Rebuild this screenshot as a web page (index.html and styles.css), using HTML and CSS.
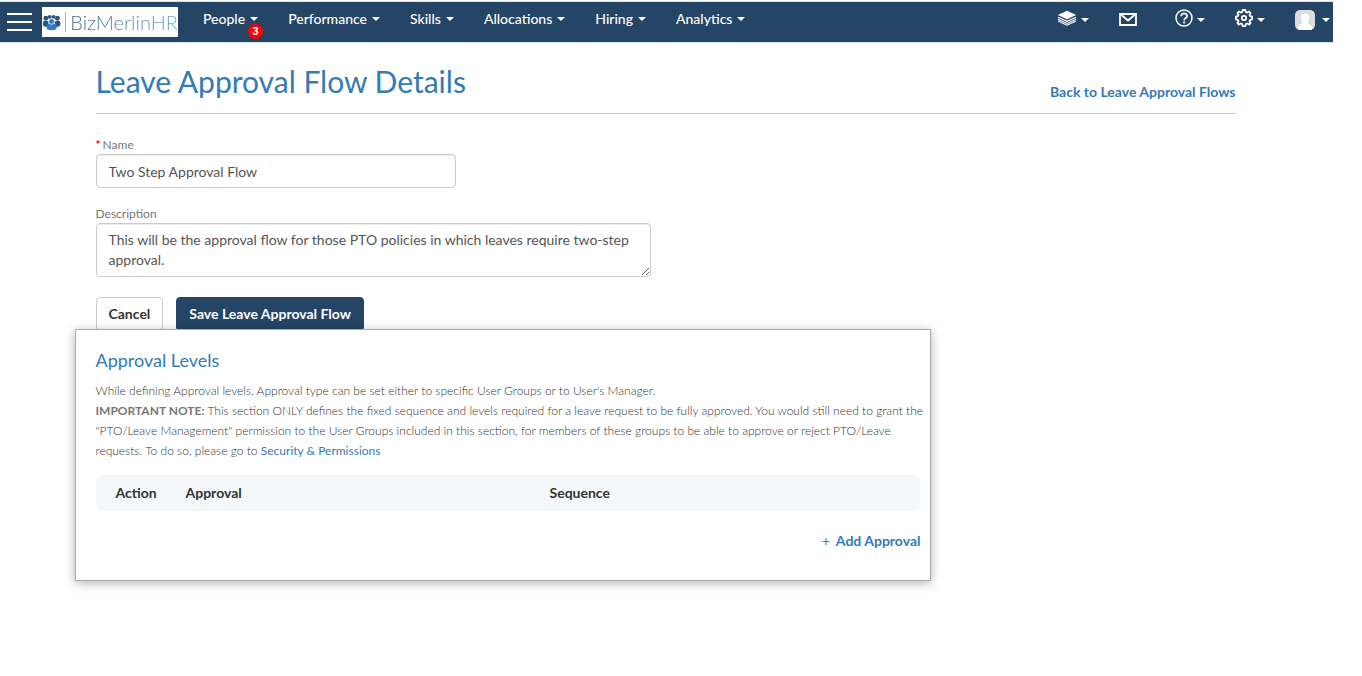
FILE: index.html
```html
<!DOCTYPE html>
<html lang="en">
<head>
<meta charset="utf-8">
<meta name="viewport" content="width=device-width, initial-scale=1">
<title>Leave Approval Flow Details</title>
<link rel="stylesheet" href="styles.css">
</head>
<body>
<header class="navbar">
  <button class="menu-toggle" type="button" aria-label="Menu"><span></span><span></span><span></span></button>
  <a class="brand" href="#">
    <svg class="brand-icon" width="20" height="17" viewBox="0 0 20 17" aria-hidden="true">
      <g fill="#2b5580">
        <circle cx="4" cy="4" r="2.500"/><circle cx="16" cy="4" r="2.500"/>
        <circle cx="8" cy="2.600" r="2"/><circle cx="12" cy="2.600" r="2"/>
        <path d="M.8 10Q.8 6.500 4 6.500Q6.200 6.500 7 8.500L5.400 13Q.8 13 .8 10zM19.200 10Q19.200 6.500 16 6.500Q13.800 6.500 13 8.500L14.600 13Q19.200 13 19.200 10z"/>
      </g>
      <g fill="#2f7ac0">
        <path d="M4.600 13.200Q4.600 10.200 7.600 9.800Q10 11.400 12.400 9.800Q15.400 10.200 15.400 13.200Q15.400 16.600 10 16.600Q4.600 16.600 4.600 13.200z"/>
        <circle cx="10" cy="7.400" r="2.800" stroke="#fff" stroke-width=".5"/>
      </g>
    </svg>
    <span class="brand-name">BizMerlinHR</span>
  </a>
  <nav class="main-nav">
    <a href="#">People<i class="caret"></i><span class="badge">3</span></a>
    <a href="#">Performance<i class="caret"></i></a>
    <a href="#">Skills<i class="caret"></i></a>
    <a href="#">Allocations<i class="caret"></i></a>
    <a href="#">Hiring<i class="caret"></i></a>
    <a href="#">Analytics<i class="caret"></i></a>
  </nav>
  <nav class="tools">
    <a href="#" aria-label="Modules">
      <svg width="20" height="16" viewBox="0 0 20 16"><path d="M10 .8L19.200 5L10 9.200L.8 5z" fill="#fff"/><path d="M1 7.200L10 11.300L19 7.200M1 9.300L10 13.400L19 9.300M1 11L10 15.200L19 11" fill="none" stroke="#fff" stroke-width="1.100"/></svg><i class="caret"></i></a>
    <a class="mail" href="#" aria-label="Messages">
      <svg width="18" height="13" viewBox="0 0 18 13"><path d="M1 1H17V12H1zM2.500 2L9 7.500L15.500 2" fill="none" stroke="#fff" stroke-width="1.800"/></svg></a>
    <a href="#" aria-label="Help">
      <svg width="18" height="18" viewBox="0 0 18 18" fill="none" stroke="#fff"><circle cx="9" cy="9" r="8" stroke-width="1.500"/><path d="M6.200 7.200Q6.200 4.300 9 4.300Q12 4.300 12 6.900Q12 8.300 10.500 9.200Q9.200 10 9.200 11.400" stroke-width="1.800"/><path d="M9.200 12.600V14.400" stroke-width="1.900"/></svg><i class="caret"></i></a>
    <a href="#" aria-label="Settings">
      <svg width="18" height="18" viewBox="0 0 18 18" fill="none" stroke="#fff" stroke-width="1.800" stroke-linejoin="round"><path d="M7.200 3L7.700 1H10.300L10.800 3L12.200 3.600L14 2.500L15.600 4.100L14.500 5.900L15.100 7.200L17.100 7.700V10.300L15.100 10.800L14.500 12.200L15.600 14L14 15.600L12.200 14.500L10.800 15.100L10.300 17.100H7.700L7.200 15.100L5.800 14.500L4 15.600L2.400 14L3.500 12.200L2.900 10.800L.9 10.300V7.700L2.900 7.200L3.500 5.900L2.400 4.100L4 2.500L5.800 3.600z"/><circle cx="9" cy="9" r="2.200"/></svg><i class="caret"></i></a>
    <a class="account" href="#" aria-label="Account">
      <svg width="20" height="20" viewBox="0 0 20 20"><rect width="20" height="20" rx="5" fill="#dcdcdc"/><path d="M10 3.500C13 3.500 14.500 5.500 14.300 8.300C14.100 10.500 13.200 11.800 12.500 12.600C12.500 14.200 17 14.300 17 18.500V20H3V18.500C3 14.300 7.500 14.200 7.500 12.600C6.800 11.800 5.900 10.500 5.700 8.300C5.500 5.500 7 3.500 10 3.500z" fill="#fff"/></svg><i class="caret"></i></a>
  </nav>
</header>

<main class="container">
  <div class="page-head">
    <h1>Leave Approval Flow Details</h1>
    <a href="#">Back to Leave Approval Flows</a>
  </div>

  <form class="flow-form">
    <div class="field field-name">
      <label for="name"><span class="required">*</span>Name</label>
      <input id="name" type="text" value="Two Step Approval Flow">
    </div>
    <div class="field field-description">
      <label for="description">Description</label>
      <textarea id="description" rows="2">This will be the approval flow for those PTO policies in which leaves require two-step approval.</textarea>
    </div>
    <div class="actions">
      <button class="btn" type="button">Cancel</button>
      <button class="btn btn-primary" type="submit">Save Leave Approval Flow</button>
    </div>
  </form>

  <section class="levels">
    <h2>Approval Levels</h2>
    <p>While defining Approval levels, Approval type can be set either to specific User Groups or to User's Manager.<br>
    <b>IMPORTANT NOTE:</b> This section ONLY defines the fixed sequence and levels required for a leave request to be fully approved. You would still need to grant the "PTO/Leave Management" permission to the User Groups included in this section, for members of these groups to be able to approve or reject PTO/Leave requests. To do so, please go to <a href="#">Security &amp; Permissions</a></p>
    <table>
      <thead><tr><th class="col-action">Action</th><th class="col-approval">Approval</th><th>Sequence</th></tr></thead>
    </table>
    <button class="add" type="button"><span class="plus">+</span>Add Approval</button>
  </section>
</main>
</body>
</html>
```
FILE: styles.css
```css
* { box-sizing: border-box; }

body {
  margin: 0;
  padding: 1px 29px 0 0;
  background: #fff;
  color: #777;
  font: 14px/20px Lato, "Liberation Sans", sans-serif;
}

a { color: #337ab7; text-decoration: none; }
button { font-family: inherit; cursor: pointer; }

/* Navigation bar */
.navbar {
  display: flex;
  align-items: flex-start;
  height: 42px;
  padding-left: 7px;
  border: solid #dce3ea;
  border-width: 1px 0;
  background: #244566;
}
.menu-toggle {
  display: flex;
  flex-direction: column;
  gap: 6px;
  width: 25px;
  margin-right: 10px;
  padding: 11px 0 0;
  border: 0;
  background: none;
}
.menu-toggle span { height: 2px; background: #fff; }
.brand {
  display: flex;
  align-items: center;
  width: 136px;
  height: 30px;
  margin-top: 5px;
  background: #fff;
}
.brand-icon { margin-right: 4px; }
.brand-name {
  padding-left: 4px;
  border-left: 1px solid #8fb4d3;
  background: linear-gradient(90deg, #3f5f80, #6fa4d0);
  background-clip: text;
  color: transparent;
  font-size: 20px;
  font-weight: 300;
  line-height: 20px;
}
.main-nav {
  display: flex;
  gap: 30px;
  margin-left: 25px;
  padding-top: 7px;
}
.main-nav a {
  position: relative;
  display: flex;
  align-items: center;
  gap: 5px;
  color: #fff;
  font-weight: 500;
}
.caret {
  border: 4px solid transparent;
  border-top-color: #fff;
  border-bottom: 0;
}
.badge {
  position: absolute;
  top: 15px;
  right: -5px;
  width: 15px;
  height: 15px;
  border-radius: 50%;
  background: #f00;
  font: bold 11px/15px "Liberation Sans", sans-serif;
  text-align: center;
}
.tools {
  display: flex;
  gap: 30px;
  margin-left: auto;
  padding: 6px 3px 0 0;
}
.tools a { display: flex; align-items: center; gap: 4px; height: 20px; }
.tools .caret { margin-top: 4px; }
.tools .mail { height: 22px; margin-right: 8px; }
.tools .account { gap: 7px; height: 24px; }
.tools .account .caret { margin-top: 0; }

/* Page */
.container { max-width: 1170px; margin: 0 auto; padding: 0 16px 0 14px; }
.page-head {
  display: flex;
  align-items: flex-end;
  justify-content: space-between;
  margin-bottom: 21px;
  padding: 18px 0 12px;
  border-bottom: 1px solid #ccc;
}
.page-head a { font-weight: bold; line-height: 18px; }
h1, h2 { margin: 0; color: #337ab7; font-weight: normal; }
h1 { font-size: 30px; line-height: 40px; }

.field { display: flex; flex-direction: column; margin-bottom: 16px; }
.field label { font-size: 12px; line-height: 19px; }
.required { margin-right: 2px; color: #f00; font-weight: bold; }
.field-name { max-width: 360px; }
.field-description { max-width: 555px; margin-bottom: 20px; }
.field input,
.field textarea {
  width: 100%;
  padding: 6px 12px;
  border: 1px solid #ccc;
  border-radius: 4px;
  box-shadow: inset 0 1px 1px rgba(0, 0, 0, .075);
  background: #fff;
  color: #555;
  font: inherit;
}
.field input { height: 34px; }
.field textarea { display: block; height: 54px; }

.actions { display: flex; gap: 13px; }
.btn {
  height: 34px;
  padding: 0 12px 2px;
  border: 1px solid #ccc;
  border-radius: 4px;
  background: #fff;
  color: #333;
  font-size: 14px;
  font-weight: bold;
}
.btn-primary { border-color: #244566; background: #244566; color: #fff; }

/* Approval levels card, raised over the form's lower edge */
.levels {
  position: relative;
  max-width: 856px;
  margin: -2px 0 30px -21px;
  padding: 19px 9px 29px 20px;
  border: 1px solid #aaa;
  box-shadow: 0 2px 10px rgba(0, 0, 0, .3);
  background: #fff;
}
h2 { font-size: 18px; line-height: 22px; }
.levels p { margin: 10px -6px 14px 0; color: #333; font-size: 12px; font-weight: 300; }
.levels p b { color: #777; font-weight: 700; }
.levels p a { font-weight: 400; }
table {
  width: 100%;
  border-collapse: collapse;
  border-radius: 8px;
  background: #f4f8fb;
}
th { padding: 8px 0; color: #333; font-weight: bold; text-align: left; }
.col-action { width: 90px; padding-left: 20px; }
.col-approval { width: 364px; }
.add {
  display: flex;
  gap: 6px;
  margin: 20px 0 0 auto;
  padding: 0;
  border: 0;
  background: none;
  color: #337ab7;
  font-size: 14px;
  font-weight: bold;
  line-height: 20px;
}
.plus { font-weight: normal; }
```
